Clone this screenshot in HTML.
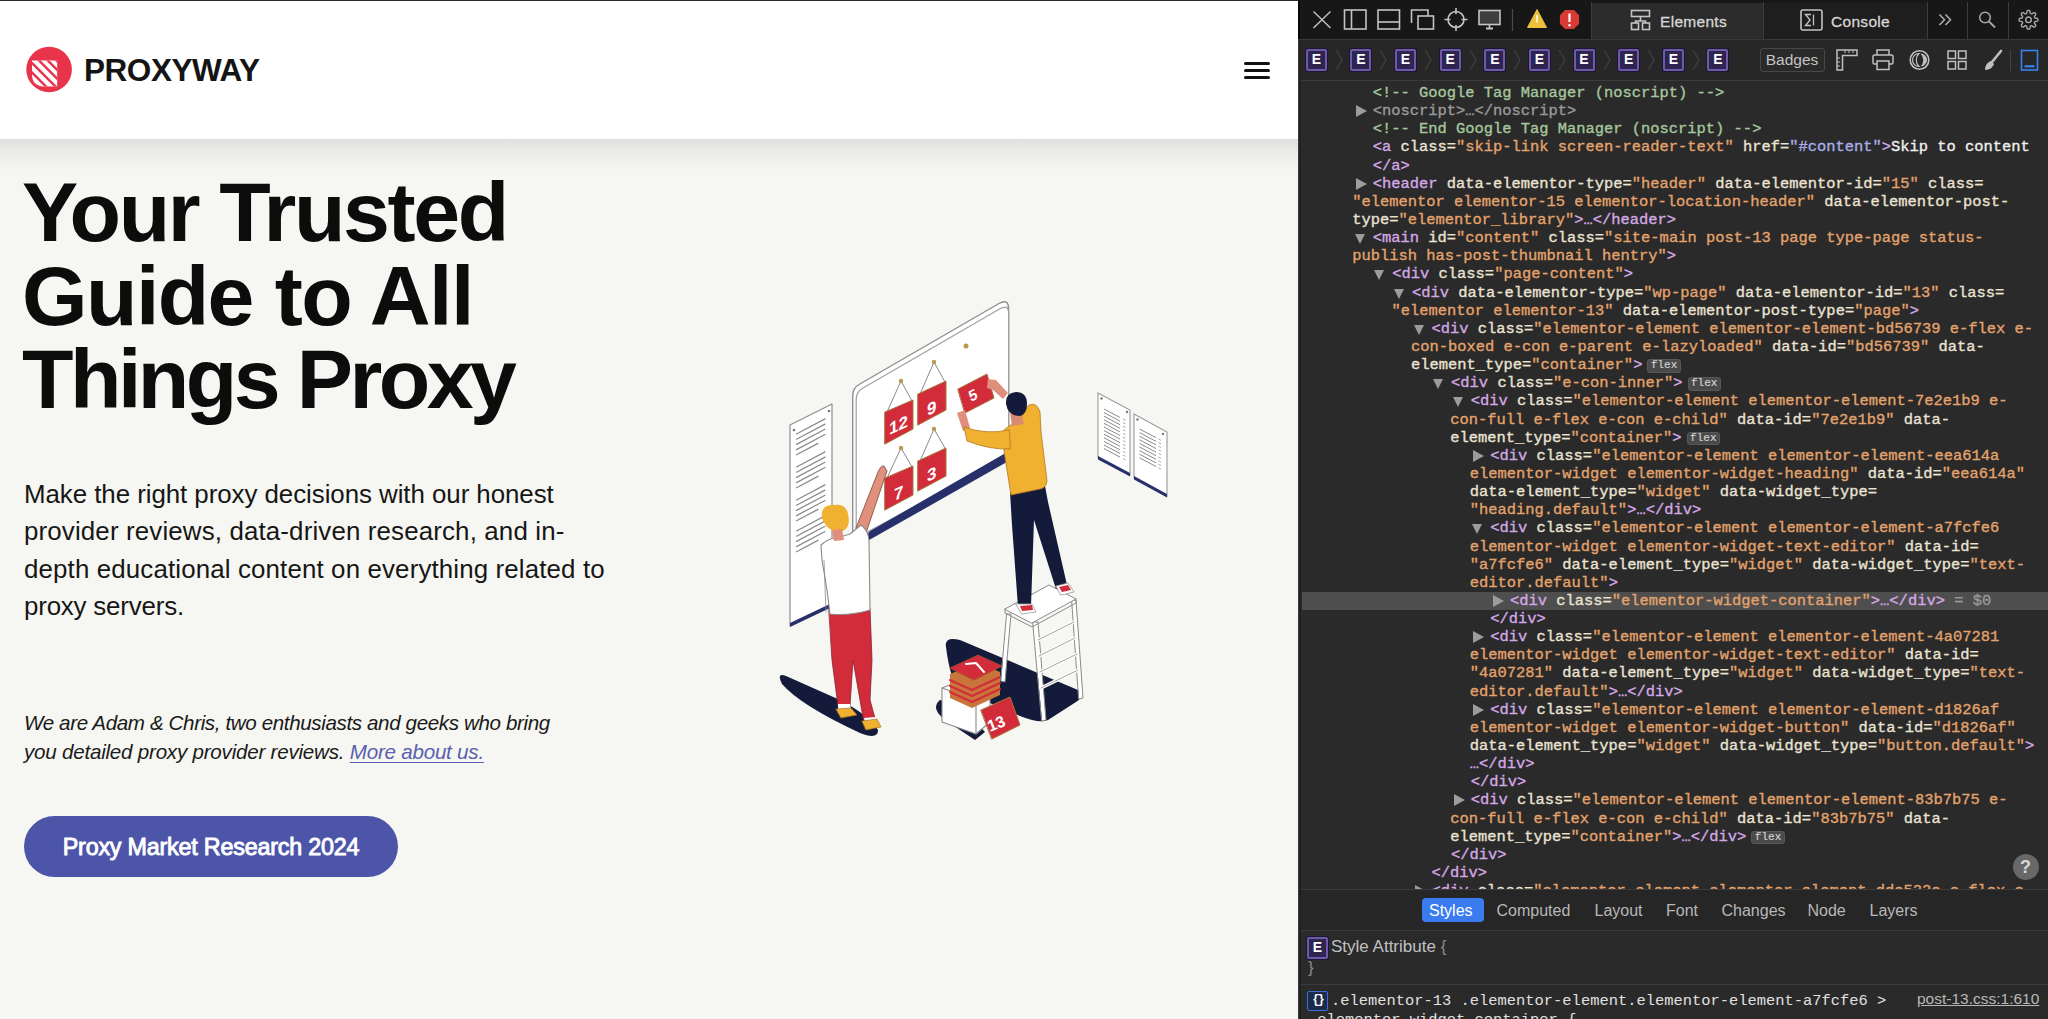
<!DOCTYPE html>
<html><head><meta charset="utf-8">
<style>
*{margin:0;padding:0;box-sizing:border-box}
html,body{width:2048px;height:1019px;overflow:hidden;background:#f6f6f2;font-family:"Liberation Sans",sans-serif}
.abs{position:absolute;white-space:pre}
#page{position:absolute;left:0;top:0;width:1299px;height:1019px;background:#f6f6f2;overflow:hidden}
#hdr{position:absolute;left:0;top:0;width:1299px;height:139px;background:#fff;border-top:1.5px solid #2a2a2a}
#shadow{position:absolute;left:0;top:139px;width:1299px;height:32px;background:linear-gradient(#dededd 0px,#e3e3e1 4px,#e9e9e5 11px,#efefeb 20px,#f6f6f2 32px)}
#logo-txt{left:84px;top:52px;font:bold 31.5px "Liberation Sans",sans-serif;color:#141414;letter-spacing:-0.45px}
.ham{position:absolute;left:1244px;width:26px;height:3.6px;background:#111;border-radius:2px}
h1{position:absolute;left:22px;top:171px;font:bold 84.3px/83.5px "Liberation Sans",sans-serif;color:#0c0c0c}
h1 span{display:block;white-space:pre}
#lead{position:absolute;left:24px;top:476px;font:25.9px/37.3px "Liberation Sans",sans-serif;color:#161616;width:700px}
#lead .l{display:block;white-space:pre}
#about{position:absolute;left:24px;top:707.5px;font:italic 20.6px/29.5px "Liberation Sans",sans-serif;color:#1a1a1a}
#about span{display:block;white-space:pre}
#about a{color:#5a5fb0;text-decoration:underline;text-underline-offset:3px;text-decoration-thickness:1px}
#btn{position:absolute;left:24px;top:816px;width:374px;height:61px;border-radius:31px;background:#4c55a8;color:#fff;font:23.3px/63px "Liberation Sans",sans-serif;text-align:center;letter-spacing:-0.2px;-webkit-text-stroke:0.9px #fff}

#dt{position:absolute;left:1299px;top:0;width:749px;height:1019px;background:#2a2a2a;overflow:hidden}
#dtb{position:absolute;left:1298px;top:0;width:1px;height:1019px;background:#3a3a3a}#dtb2{position:absolute;left:1298px;top:0;width:2px;height:39px;background:#080808}#dtb3{position:absolute;left:1299px;top:40px;width:2px;height:979px;background:#222}
#tb{position:absolute;left:0;top:0;width:749px;height:40px;background:#171717;border-bottom:1.5px solid #383838}
#tabE{position:absolute;left:292px;top:3px;width:172px;height:36px;background:#2b2b2b}
#tabC{position:absolute;left:465px;top:3px;width:163px;height:36px;background:#1e1e1e}
.vl{position:absolute;width:1px;background:#3c3c3c}
.tabt{font:15.5px "Liberation Sans",sans-serif;color:#d6d6d6;letter-spacing:0.3px;-webkit-text-stroke:0.3px currentColor}
#bc{position:absolute;left:0;top:40px;width:749px;height:41px;background:#272727;border-bottom:1.5px solid #3c3c3c}
.eic{position:absolute;width:21px;height:22px;background:#2e2450;border:2px solid #6e5aa6;box-shadow:0 0 0 1px #1d1535;border-radius:2px;color:#fff;font:bold 14px/17px "Liberation Sans",sans-serif;text-align:center}
.bic{position:absolute;width:21px;height:20px;background:#1d2b4a;border:1.5px solid #3a6fd8;border-radius:2px;color:#fff;font:bold 12px/17px "Liberation Mono",monospace;text-align:center;letter-spacing:-2px}
.chev{position:absolute;width:10px;height:21px}
.badges{left:460.5px;top:48px;width:65px;height:24px;border:1px solid #474747;border-radius:3px;font:15.5px/22px "Liberation Sans",sans-serif;color:#c4c4c4;text-align:center;background:#2a2a2a}
#dom{position:absolute;left:0;top:81px;width:749px;height:808px;background:#2a2a2a;overflow:hidden}
.ln{position:absolute;white-space:pre;font:15.43px/18.14px "Liberation Mono",monospace;color:#e6e2d6;-webkit-text-stroke:0.35px currentColor}
.t{color:#d4a8e6}.a{color:#ebe3d3}.v{color:#e3a36c}.c{color:#a6c79c}.g{color:#9a9a9a}.u{color:#a8aee6}.w{color:#f0f0f0}
.bd{display:inline-block;margin-left:5px;height:13.5px;padding:0 2.5px;border-radius:3px;background:#4a4a4a;border:1px solid #585858;color:#d0d0d0;font:11px/11px "Liberation Mono",monospace;vertical-align:1px;-webkit-text-stroke:0.2px currentColor}
.tr{position:absolute;width:0;height:0;border-left:11px solid #9c9c9c;border-top:6.3px solid transparent;border-bottom:6.3px solid transparent}
.td{position:absolute;width:0;height:0;border-top:10.6px solid #9c9c9c;border-left:5.7px solid transparent;border-right:5.7px solid transparent}
.hl{position:absolute;left:3px;width:746px;height:18.14px;background:#4e4e4e}
#tabs{position:absolute;left:0;top:889px;width:749px;height:42px;background:#262626;border-top:1px solid #3c3c3c;border-bottom:1px solid #3c3c3c}
.pill{left:122.5px;top:898px;width:62px;height:23.5px;background:#3a7cf0;border-radius:4px}
.st{font:16px/20px "Liberation Sans",sans-serif;color:#b8b8b8}
#sty{position:absolute;left:0;top:931px;width:749px;height:88px;background:#2a2a2a}
.sa{font:17px/20px "Liberation Sans",sans-serif;color:#c0c0c0}
.hr2{left:0;width:749px;height:1px;background:#3c3c3c}
.ln2{font:15.43px/18px "Liberation Mono",monospace;color:#e0e0e0}
.link{left:618px;top:990px;font:15.5px/18px "Liberation Sans",sans-serif;color:#b8b8b8;text-decoration:underline}
.help{position:absolute;left:713.5px;top:853.5px;width:26px;height:26px;border-radius:13px;background:#686868;color:#d8d8d8;font:bold 18px/26px "Liberation Sans",sans-serif;text-align:center}
</style></head><body>
<div id="page">
  <div id="hdr"></div>
  <div id="shadow"></div>
  <svg class="abs" style="left:26px;top:46px" width="47" height="47" viewBox="0 0 47 47">
    <defs><clipPath id="lc"><path d="M6 14.4 H31.2 V40.6 H19 Q6 40.6 6 28 Z"/></clipPath></defs>
    <circle cx="23.1" cy="23.5" r="22.8" fill="#e8334a"/>
    <g clip-path="url(#lc)">
      <rect x="0" y="0" width="47" height="47" fill="#fff"/>
      <g stroke="#e8334a" stroke-width="2.4">
      <line x1="-10" y1="-26" x2="60" y2="44"/>
      <line x1="-10" y1="-17.3" x2="60" y2="52.7"/>
      <line x1="-10" y1="-8.5" x2="60" y2="61.5"/>
      <line x1="-10" y1="1" x2="60" y2="71"/>
      <line x1="-10" y1="10.5" x2="60" y2="80.5"/>
      </g>
    </g>
  </svg>
  <div id="logo-txt" class="abs">PROXYWAY</div>
  <div class="ham" style="top:61.5px"></div>
  <div class="ham" style="top:68.5px"></div>
  <div class="ham" style="top:75.5px"></div>
  <h1><span style="letter-spacing:-2.41px">Your Trusted</span><span style="letter-spacing:-1.59px">Guide to All</span><span style="letter-spacing:-3.55px">Things Proxy</span></h1>
  <div id="lead"><span class="l" style="letter-spacing:-0.06px">Make the right proxy decisions with our honest</span><span class="l" style="letter-spacing:0.14px">provider reviews, data-driven research, and in-</span><span class="l" style="letter-spacing:0.13px">depth educational content on everything related to</span><span class="l" style="letter-spacing:-0.19px">proxy servers.</span></div>
  <div id="about"><span style="letter-spacing:-0.38px">We are Adam &amp; Chris, two enthusiasts and geeks who bring</span><span style="letter-spacing:-0.23px">you detailed proxy provider reviews. <a>More about us.</a></span></div>
  <div id="btn">Proxy Market Research 2024</div>
  <svg class="abs" style="left:0;top:0" width="1299" height="1019" viewBox="0 0 1299 1019">
  <g stroke-linejoin="round" stroke-linecap="round">
  <!-- left paper -->
  <path d="M790 425 L832 404 L832 606 L790 626 Z" fill="#fff" stroke="#8e8e8e" stroke-width="1.2"/>
  <path d="M790 623 L832 603 L832 607 L790 627 Z" fill="#27306a"/>
  <g stroke="#8a8a8a" stroke-width="1.2">
    <path d="M796.5 434.0 L825 418.9 M796.5 439.2 L825 424.1 M796.5 444.4 L825 429.3 M796.5 449.6 L825 434.5 M796.5 454.8 L818 443.4 M796.5 467.0 L825 451.9 M796.5 472.2 L825 457.1 M796.5 477.4 L825 462.3 M796.5 482.6 L825 467.5 M796.5 487.8 L818 476.4 M796.5 500.0 L825 484.9 M796.5 505.2 L825 490.1 M796.5 510.4 L825 495.3 M796.5 515.6 L825 500.5 M796.5 520.8 L818 509.4 M796.5 531.0 L825 515.9 M796.5 536.2 L825 521.1 M796.5 541.4 L825 526.3 M796.5 546.6 L825 531.5 M796.5 551.8 L818 540.4"/>
  </g>
  <circle cx="794" cy="430" r="1.3" fill="#777"/><circle cx="829" cy="411" r="1.3" fill="#777"/>
  <!-- board -->
  <path d="M852.7 536 L852.7 396 Q852.7 387.8 859.8 384 L999 303.5 Q1008.6 298.2 1008.6 309 L1008.6 456 Z" fill="#fff" stroke="#8f8f8f" stroke-width="1.4"/>
  <path d="M856.2 538 L856.2 399.5 Q856.2 392 863 388 L1000 308.8 Q1008.6 303.8 1008.6 313 L1008.6 456 Z" fill="#fff" stroke="#a0a0a0" stroke-width="1.2"/>
  <path d="M864.3 542.8 L869 531.8 L1006 452.8 L1006 462.6 Z" fill="#27306a"/>
  <circle cx="966" cy="346" r="2.5" fill="#b89a50"/>
  <!-- strings -->
  <g stroke="#8a8a8a" stroke-width="1" fill="none">
    <path d="M887 412 L901 381 L912 401"/>
    <path d="M920 394 L934 362 L945 382"/>
    <path d="M887 478 L901 448 L912 467"/>
    <path d="M920 461 L934 429 L945 448"/>
  </g>
  <g fill="#b89a50"><circle cx="901" cy="381" r="2.2"/><circle cx="934" cy="362" r="2.2"/><circle cx="901" cy="448" r="2.2"/><circle cx="934" cy="429" r="2.2"/></g>
  <!-- cards -->
  <g fill="#d22c3a" stroke="#a8743e" stroke-width="1">
    <path d="M885 412 L913 400 L913 429 L885 444 Z"/>
    <path d="M918 394 L946 381 L946 410 L918 425 Z"/>
    <path d="M885 478 L913 466 L913 495 L885 510 Z"/>
    <path d="M918 461 L946 448 L946 476 L918 491 Z"/>
    <path d="M958 389 L987 374 L994 398 L965 413 Z"/>
  </g>
  <g fill="#fff" font-family="Liberation Sans" font-weight="bold" font-size="17">
    <text transform="translate(889 435) skewY(-24)">12</text>
    <text transform="translate(927 416) skewY(-24)">9</text>
    <text transform="translate(894 501) skewY(-24)">7</text>
    <text transform="translate(927 482) skewY(-24)">3</text>
    <text transform="translate(971 402) rotate(-20) skewY(-8)" font-size="15">5</text>
  </g>
  <!-- person 1 shadow -->
  <path d="M786 676 Q776 672 782 684 Q800 705 860 733 Q878 740 878 730 Q870 716 840 700 Z" fill="#141b3a"/>
  <!-- person 1 arm -->
  <path d="M856 528 L878 472 Q881 465 884 466 L887 471 L866 533 Z" fill="#e0907c" stroke="#7a4a3a" stroke-width="0.8"/>
  <!-- pants -->
  <path d="M829 608 L870 608 L872 660 L870 700 L876 722 L864 723 L853 660 L850 706 L838 706 L832 660 Z" fill="#d22c3a" stroke="#8a2030" stroke-width="0.8"/>
  <path d="M838 704 L850 704 L851 709 L838 709 Z" fill="#fff"/>
  <path d="M864 718 L876 717 L877 722 L865 722 Z" fill="#fff"/>
  <!-- shoes -->
  <path d="M836 709 L851 708 L857 715 L841 718 Z" fill="#f0b030" stroke="#9a6a20" stroke-width="0.6"/>
  <path d="M862 721 L877 719 L881 727 L866 730 Z" fill="#f0b030" stroke="#9a6a20" stroke-width="0.6"/>
  <!-- shirt -->
  <path d="M821 545 Q828 538 840 537 L850 534 L861 525 Q868 530 869 540 L870 610 Q850 616 830 614 L827 590 L822 560 Z" fill="#fff" stroke="#8a8a8a" stroke-width="1.1"/>
  <path d="M824 560 L826 612" stroke="#8a8a8a" stroke-width="0.8" fill="none"/>
  <!-- hair -->
  <path d="M822 518 Q820 505 833 505 Q846 503 848 514 Q851 527 843 531 Q828 534 822 518 Z" fill="#f0b030"/>
  <path d="M832 530 L842 529 L844 540 L834 541 Z" fill="#e08f7c"/>

  <!-- big shadow right -->
  <path d="M946 647 Q944 636 960 640 L1078 690 Q1086 696 1076 702 L1048 720 Q1040 724 1020 716 L960 690 Q950 680 946 647 Z" fill="#141b3a"/>
  <path d="M940 700 Q930 708 945 720 L975 740 L985 732 L960 705 Z" fill="#141b3a"/>
  <!-- box -->
  <path d="M942 688 L968 678 L990 688 L990 722 L976 734 L942 722 Z" fill="#fff" stroke="#8a8a8a" stroke-width="1.1"/>
  <path d="M942 688 L976 700 L976 734" fill="none" stroke="#8a8a8a" stroke-width="1.1"/>
  <!-- red stack -->
  <path d="M950 674 L978 662 L1000 672 L1000 695 L972 708 L950 698 Z" fill="#c8743a"/>
  <g stroke="#d22c3a" stroke-width="2" fill="none"><path d="M950 680 L972 690 L1000 677 M950 686 L972 696 L1000 683 M950 692 L972 702 L1000 689"/></g>
  <path d="M950 668 L978 655 L1002 666 L974 680 Z" fill="#d22c3a" stroke="#a05030" stroke-width="0.8"/>
  <path d="M966 664 L976 663 L984 672" stroke="#fff" stroke-width="2" fill="none"/>
  <!-- card 13 -->
  <path d="M981 710 L1010 697 L1020 725 L992 739 Z" fill="#d22c3a" stroke="#a8743e" stroke-width="1"/>
  <text transform="translate(990 732) rotate(-22)" fill="#fff" font-family="Liberation Sans" font-weight="bold" font-size="16">13</text>
  <!-- ladder -->
  <g stroke="#8a8a8a" stroke-width="1" fill="#fff">
    <path d="M1007 614 L1011 614 L1005 682 L1001 681 Z"/>
    <path d="M1033 622 L1038 622 L1046 720 L1042 721 Z"/>
    <path d="M1072 600 L1076 600 L1083 698 L1079 699 Z"/>
    <path d="M1038 640 L1074 622 M1039 656 L1075 638 M1040 672 L1077 654 M1041 688 L1078 670" stroke="#fff" stroke-width="3.5"/>
    <path d="M1038 640 L1074 622 M1039 656 L1075 638 M1040 672 L1077 654 M1041 688 L1078 670" stroke="#8a8a8a" stroke-width="0.8" fill="none"/>
    <path d="M1005 609 L1049 585 L1076 599 L1032 623 Z"/>
    <path d="M1005 609 L1005 613 L1032 627 L1076 603 L1076 599" fill="none"/>
  </g>
  <!-- person 2 pants -->
  <path d="M1010 492 L1045 486 L1048 502 L1067 585 L1056 589 L1034 520 L1031 606 L1018 607 L1012 525 Z" fill="#141b3a"/>
  <path d="M1016 604 L1032 604 L1036 612 L1022 614 Z" fill="#fff" stroke="#999" stroke-width="0.8"/>
  <path d="M1020 606 L1032 605 L1033 610 L1022 611 Z" fill="#d22c3a"/>
  <path d="M1056 586 L1068 583 L1074 592 L1061 595 Z" fill="#fff" stroke="#999" stroke-width="0.8"/>
  <path d="M1059 587 L1068 585 L1071 590 L1062 592 Z" fill="#d22c3a"/>
  <!-- person 2 arms -->
  <path d="M988 379 L996 380 L1008 393 L1003 399 L993 390 L987 388 Z" fill="#e08f7c"/>
  <path d="M957 413 L965 410 L970 428 L963 431 Z" fill="#e08f7c"/>
  <!-- sweater -->
  <path d="M1004 430 Q1010 424 1021 421 Q1023 409 1029 405 Q1037 402 1040 412 L1041 432 L1047 481 Q1046 488 1040 489 L1011 495 L1004 451 Z" fill="#f0b030" stroke="#b07820" stroke-width="0.8"/>
  <path d="M1009 430 Q986 435 964 427 L967 441 Q990 450 1010 449 Z" fill="#f0b030" stroke="#b07820" stroke-width="0.8"/>
  <!-- head -->
  <path d="M1010 412 L1020 410 L1024 424 L1012 426 Z" fill="#d98a70"/>
  <path d="M1006 404 Q1005 393 1016 392 Q1027 392 1027 404 Q1027 414 1020 416 Q1008 416 1006 404 Z" fill="#141b3a"/>
  </g>
  <!-- right papers -->
  <path d="M1098 393 L1130 410 L1130 475 L1098 458 Z" fill="#fff" stroke="#9a9a9a" stroke-width="1.1"/>
  <path d="M1098 456 L1130 473 L1130 476.5 L1098 459.5 Z" fill="#27306a"/>
  <path d="M1134 414 L1167 432 L1167 496 L1134 478 Z" fill="#fff" stroke="#9a9a9a" stroke-width="1.1"/>
  <path d="M1134 476 L1167 494 L1167 497.5 L1134 479.5 Z" fill="#27306a"/>
  <g stroke="#8a8a8a" stroke-width="1"><path d="M1104 409.0 L1120 417.5 M1104 412.6 L1120 421.1 M1104 416.2 L1120 424.7 M1104 419.8 L1120 428.3 M1104 423.4 L1120 431.9 M1104 427.0 L1120 435.5 M1104 430.6 L1120 439.1 M1104 434.2 L1120 442.7 M1104 437.8 L1120 446.3 M1104 441.4 L1120 449.9 M1104 445.0 L1120 453.5 M1104 448.6 L1120 457.1 M1139.5 429.0 L1156 437.7 M1139.5 432.6 L1156 441.3 M1139.5 436.2 L1156 444.9 M1139.5 439.8 L1156 448.5 M1139.5 443.4 L1156 452.1 M1139.5 447.0 L1156 455.7 M1139.5 450.6 L1156 459.3 M1139.5 454.2 L1156 462.9 M1139.5 457.8 L1156 466.5"/></g>
  <g stroke="#aaa" stroke-width="1"><path d="M1123 419.0 L1125.5 420.3 M1123 422.6 L1125.5 423.9 M1123 426.2 L1125.5 427.5 M1123 429.8 L1125.5 431.1 M1123 433.4 L1125.5 434.7 M1123 437.0 L1125.5 438.3 M1123 440.6 L1125.5 441.9 M1123 444.2 L1125.5 445.5 M1123 447.8 L1125.5 449.1 M1123 451.4 L1125.5 452.7 M1123 455.0 L1125.5 456.3 M1123 458.6 L1125.5 459.9 M1158.5 439.0 L1161 440.3 M1158.5 442.6 L1161 443.9 M1158.5 446.2 L1161 447.5 M1158.5 449.8 L1161 451.1 M1158.5 453.4 L1161 454.7 M1158.5 457.0 L1161 458.3 M1158.5 460.6 L1161 461.9 M1158.5 464.2 L1161 465.5 M1158.5 467.8 L1161 469.1"/></g>
  <circle cx="1101.5" cy="398.5" r="1.2" fill="#777"/><circle cx="1127" cy="412" r="1.2" fill="#777"/>
  <circle cx="1137.5" cy="419.5" r="1.2" fill="#777"/><circle cx="1163" cy="434" r="1.2" fill="#777"/>
</svg>

</div>
<div id="dt">
  <div id="tb"></div>
  <div id="tabE"></div>
  <div id="tabC"></div>
  <!-- toolbar icons -->
  <svg class="abs" style="left:0;top:0" width="749" height="40" viewBox="1299 0 749 40" fill="none" stroke="#c4c4c4" stroke-width="1.6">
    <path d="M1313.5 11.5 L1330.5 28 M1330.5 11.5 L1313.5 28" stroke-width="1.4"/>
    <rect x="1344.5" y="10" width="21.5" height="19"/>
    <line x1="1351.5" y1="10" x2="1351.5" y2="29"/>
    <rect x="1378" y="10" width="21.5" height="19"/>
    <line x1="1378" y1="22" x2="1399.5" y2="22"/>
    <path d="M1411.5 23 V10 H1428 V15.5"/>
    <rect x="1418" y="16" width="15.5" height="13"/>
    <circle cx="1456" cy="19.5" r="8"/>
    <path d="M1456 8 V14 M1456 25 V31 M1444.5 19.5 H1450.5 M1461.5 19.5 H1467.5"/>
    <rect x="1479" y="10.5" width="21" height="14" fill="#3e3e3e"/>
    <path d="M1486 28.5 H1493" stroke-width="2"/>
    <path d="M1489.5 25 V28"/>
    <line x1="1512.5" y1="9" x2="1512.5" y2="31" stroke="#4a4a4a" stroke-width="1.2"/>
    <path d="M1537 9.5 L1546.5 27.5 H1527.5 Z" fill="#ecc03a" stroke="#ecc03a" stroke-width="1" stroke-linejoin="round"/>
    <path d="M1537 15 V22.5" stroke="#fff6d0" stroke-width="1.8"/>
    <path d="M1565.5 10.5 H1573.5 L1578.5 15.5 V23.5 L1573.5 28.5 H1565.5 L1560.5 23.5 V15.5 Z" fill="#d83a36" stroke="#d83a36" stroke-width="1.2" stroke-linejoin="round"/>
    <path d="M1569.5 13.5 V22" stroke="#fff" stroke-width="2.2"/>
    <circle cx="1569.5" cy="25.3" r="1.2" fill="#fff" stroke="none"/>
    <!-- elements icon -->
    <rect x="1631.5" y="10.5" width="18" height="6"/>
    <path d="M1640.5 16.5 V21 M1635.5 23 V21 H1645.5 V23"/>
    <rect x="1631.5" y="23" width="7" height="6.5"/>
    <rect x="1642.5" y="23" width="7" height="6.5"/>
    <!-- console icon -->
    <rect x="1801" y="10" width="21" height="20" rx="2"/>
    <path d="M1811 14.5 H1805.5 L1810 20 L1805.5 25.5 H1811" stroke-width="1.3"/>
    <path d="M1813.5 14.5 V25.5" stroke-width="1.3"/>
    <!-- chevrons -->
    <path d="M1939.5 14.5 L1944.5 19.8 L1939.5 25 M1945.5 14.5 L1950.5 19.8 L1945.5 25" stroke="#b0b0b0" stroke-width="1.5"/>
    <!-- search -->
    <circle cx="1985" cy="17.5" r="5.3" stroke="#a8a8a8" stroke-width="1.5"/>
    <path d="M1989 21.5 L1995 27.5" stroke="#a8a8a8" stroke-width="1.8"/>
    <!-- gear -->
    <path d="M2038.00 19.80 L2037.97 20.10 L2037.89 20.39 L2037.76 20.68 L2037.56 20.94 L2037.27 21.19 L2036.78 21.38 L2035.62 21.39 L2035.26 21.54 L2035.01 21.69 L2034.81 21.85 L2034.66 22.02 L2034.55 22.19 L2034.47 22.38 L2034.43 22.59 L2034.41 22.81 L2034.44 23.06 L2034.51 23.35 L2034.66 23.71 L2035.47 24.54 L2035.69 25.02 L2035.72 25.40 L2035.67 25.73 L2035.56 26.03 L2035.41 26.29 L2035.22 26.52 L2034.99 26.71 L2034.73 26.86 L2034.43 26.97 L2034.10 27.02 L2033.72 26.99 L2033.24 26.77 L2032.41 25.96 L2032.05 25.81 L2031.76 25.74 L2031.51 25.71 L2031.29 25.73 L2031.08 25.77 L2030.89 25.85 L2030.72 25.96 L2030.55 26.11 L2030.39 26.31 L2030.24 26.56 L2030.09 26.92 L2030.08 28.08 L2029.89 28.57 L2029.64 28.86 L2029.38 29.06 L2029.09 29.19 L2028.80 29.27 L2028.50 29.30 L2028.20 29.27 L2027.91 29.19 L2027.62 29.06 L2027.36 28.86 L2027.11 28.57 L2026.92 28.08 L2026.91 26.92 L2026.76 26.56 L2026.61 26.31 L2026.45 26.11 L2026.28 25.96 L2026.11 25.85 L2025.92 25.77 L2025.71 25.73 L2025.49 25.71 L2025.24 25.74 L2024.95 25.81 L2024.59 25.96 L2023.76 26.77 L2023.28 26.99 L2022.90 27.02 L2022.57 26.97 L2022.27 26.86 L2022.01 26.71 L2021.78 26.52 L2021.59 26.29 L2021.44 26.03 L2021.33 25.73 L2021.28 25.40 L2021.31 25.02 L2021.53 24.54 L2022.34 23.71 L2022.49 23.35 L2022.56 23.06 L2022.59 22.81 L2022.57 22.59 L2022.53 22.38 L2022.45 22.19 L2022.34 22.02 L2022.19 21.85 L2021.99 21.69 L2021.74 21.54 L2021.38 21.39 L2020.22 21.38 L2019.73 21.19 L2019.44 20.94 L2019.24 20.68 L2019.11 20.39 L2019.03 20.10 L2019.00 19.80 L2019.03 19.50 L2019.11 19.21 L2019.24 18.92 L2019.44 18.66 L2019.73 18.41 L2020.22 18.22 L2021.38 18.21 L2021.74 18.06 L2021.99 17.91 L2022.19 17.75 L2022.34 17.58 L2022.45 17.41 L2022.53 17.22 L2022.57 17.01 L2022.59 16.79 L2022.56 16.54 L2022.49 16.25 L2022.34 15.89 L2021.53 15.06 L2021.31 14.58 L2021.28 14.20 L2021.33 13.87 L2021.44 13.57 L2021.59 13.31 L2021.78 13.08 L2022.01 12.89 L2022.27 12.74 L2022.57 12.63 L2022.90 12.58 L2023.28 12.61 L2023.76 12.83 L2024.59 13.64 L2024.95 13.79 L2025.24 13.86 L2025.49 13.89 L2025.71 13.87 L2025.92 13.83 L2026.11 13.75 L2026.28 13.64 L2026.45 13.49 L2026.61 13.29 L2026.76 13.04 L2026.91 12.68 L2026.92 11.52 L2027.11 11.03 L2027.36 10.74 L2027.62 10.54 L2027.91 10.41 L2028.20 10.33 L2028.50 10.30 L2028.80 10.33 L2029.09 10.41 L2029.38 10.54 L2029.64 10.74 L2029.89 11.03 L2030.08 11.52 L2030.09 12.68 L2030.24 13.04 L2030.39 13.29 L2030.55 13.49 L2030.72 13.64 L2030.89 13.75 L2031.08 13.83 L2031.29 13.87 L2031.51 13.89 L2031.76 13.86 L2032.05 13.79 L2032.41 13.64 L2033.24 12.83 L2033.72 12.61 L2034.10 12.58 L2034.43 12.63 L2034.73 12.74 L2034.99 12.89 L2035.22 13.08 L2035.41 13.31 L2035.56 13.57 L2035.67 13.87 L2035.72 14.20 L2035.69 14.58 L2035.47 15.06 L2034.66 15.89 L2034.51 16.25 L2034.44 16.54 L2034.41 16.79 L2034.43 17.01 L2034.47 17.22 L2034.55 17.41 L2034.66 17.58 L2034.81 17.75 L2035.01 17.91 L2035.26 18.06 L2035.62 18.21 L2036.78 18.22 L2037.27 18.41 L2037.56 18.66 L2037.76 18.92 L2037.89 19.21 L2037.97 19.50 Z" stroke="#a8a8a8" stroke-width="1.4" stroke-linejoin="round"/>
    <circle cx="2028.5" cy="19.8" r="2.8" stroke="#a8a8a8" stroke-width="1.4"/>
  </svg>
  <div class="abs tabt" style="left:361px;top:13px">Elements</div>
  <div class="abs tabt" style="left:532px;top:13px">Console</div>
  <div class="vl" style="left:292px;top:2px;height:37px"></div>
  <div class="vl" style="left:464px;top:2px;height:37px"></div>
  <div class="vl" style="left:628px;top:2px;height:37px"></div>
  <div class="vl" style="left:668px;top:2px;height:37px"></div>
  <div class="vl" style="left:709px;top:2px;height:37px"></div>

  <div id="bc"></div>
  <!-- breadcrumb E icons -->
  <div class="eic" style="left:6.8px;top:49px">E</div>
  <svg class="abs" style="left:34.8px;top:49px" width="10" height="22" viewBox="0 0 10 22"><path d="M2 1 L8 11 L2 21" fill="none" stroke="#3e3e3e" stroke-width="1.4"/></svg>
  <div class="eic" style="left:51.4px;top:49px">E</div>
  <svg class="abs" style="left:79.4px;top:49px" width="10" height="22" viewBox="0 0 10 22"><path d="M2 1 L8 11 L2 21" fill="none" stroke="#3e3e3e" stroke-width="1.4"/></svg>
  <div class="eic" style="left:96.0px;top:49px">E</div>
  <svg class="abs" style="left:124.0px;top:49px" width="10" height="22" viewBox="0 0 10 22"><path d="M2 1 L8 11 L2 21" fill="none" stroke="#3e3e3e" stroke-width="1.4"/></svg>
  <div class="eic" style="left:140.7px;top:49px">E</div>
  <svg class="abs" style="left:168.7px;top:49px" width="10" height="22" viewBox="0 0 10 22"><path d="M2 1 L8 11 L2 21" fill="none" stroke="#3e3e3e" stroke-width="1.4"/></svg>
  <div class="eic" style="left:185.3px;top:49px">E</div>
  <svg class="abs" style="left:213.3px;top:49px" width="10" height="22" viewBox="0 0 10 22"><path d="M2 1 L8 11 L2 21" fill="none" stroke="#3e3e3e" stroke-width="1.4"/></svg>
  <div class="eic" style="left:229.9px;top:49px">E</div>
  <svg class="abs" style="left:257.9px;top:49px" width="10" height="22" viewBox="0 0 10 22"><path d="M2 1 L8 11 L2 21" fill="none" stroke="#3e3e3e" stroke-width="1.4"/></svg>
  <div class="eic" style="left:274.5px;top:49px">E</div>
  <svg class="abs" style="left:302.5px;top:49px" width="10" height="22" viewBox="0 0 10 22"><path d="M2 1 L8 11 L2 21" fill="none" stroke="#3e3e3e" stroke-width="1.4"/></svg>
  <div class="eic" style="left:319.1px;top:49px">E</div>
  <svg class="abs" style="left:347.1px;top:49px" width="10" height="22" viewBox="0 0 10 22"><path d="M2 1 L8 11 L2 21" fill="none" stroke="#3e3e3e" stroke-width="1.4"/></svg>
  <div class="eic" style="left:363.8px;top:49px">E</div>
  <svg class="abs" style="left:391.8px;top:49px" width="10" height="22" viewBox="0 0 10 22"><path d="M2 1 L8 11 L2 21" fill="none" stroke="#3e3e3e" stroke-width="1.4"/></svg>
  <div class="eic" style="left:408.4px;top:49px">E</div>
  <div class="abs badges">Badges</div>
  <svg class="abs" style="left:0;top:40px" width="749" height="40" viewBox="1299 40 749 40" fill="none" stroke="#c0c0c0" stroke-width="1.5">
    <!-- ruler -->
    <path d="M1837 50 H1857 V55.5 H1842.5 V70 H1837 Z"/>
    <path d="M1845 50 V53 M1849 50 V53 M1853 50 V53 M1837 58 H1840 M1837 62 H1840 M1837 66 H1840" stroke-width="1"/>
    <!-- printer -->
    <path d="M1877 55 V50 H1889 V55"/>
    <rect x="1873" y="55" width="20" height="9" rx="1.5"/>
    <rect x="1877" y="61" width="12" height="8.5" fill="#262626"/>
    <!-- contrast circle -->
    <circle cx="1919.5" cy="60" r="9.3" stroke-width="1.6"/>
    <path d="M1920.5 53.5 A6.5 6.5 0 0 1 1920.5 66.5 A9 9 0 0 0 1920.5 53.5 Z" fill="#c0c0c0" stroke="none"/>
    <path d="M1919 53.5 A6.5 6.5 0 0 0 1919 66.5 A9 9 0 0 1 1919 53.5 Z" fill="none" stroke-width="1.2"/>
    <!-- grid -->
    <rect x="1948" y="51" width="7.5" height="7.5"/><rect x="1958.5" y="51" width="7.5" height="7.5"/>
    <rect x="1948" y="61.5" width="7.5" height="7.5"/><rect x="1958.5" y="61.5" width="7.5" height="7.5"/>
    <!-- brush -->
    <path d="M2001 51 L1992 62" stroke-width="2.6" stroke-linecap="round"/>
    <path d="M1991 61.5 Q1986 63 1985.5 69.5 Q1992 69 1993.5 64 Z" fill="#c0c0c0" stroke-width="1"/>
    <line x1="2010.5" y1="50" x2="2010.5" y2="71" stroke="#444" stroke-width="1"/>
    <!-- blue book -->
    <rect x="2021.5" y="50.5" width="16" height="19.5" stroke="#3b82f0" stroke-width="1.6"/>
    <path d="M2024.5 66.3 H2034.5" stroke="#3b82f0" stroke-width="2.2"/>
  </svg>

  <div id="dom">
<div class="ln" style="left:73.7px;top:3.00px"><span class="c">&lt;!-- Google Tag Manager (noscript) --&gt;</span></div>
<div class="tr" style="left:56.7px;top:24.14px"></div>
<div class="ln" style="left:73.7px;top:21.14px"><span class="g">&lt;noscript&gt;…&lt;/noscript&gt;</span></div>
<div class="ln" style="left:73.7px;top:39.28px"><span class="c">&lt;!-- End Google Tag Manager (noscript) --&gt;</span></div>
<div class="ln" style="left:73.7px;top:57.42px"><span class="t">&lt;a</span><span class="a"> class=</span><span class="v">&quot;skip-link screen-reader-text&quot;</span><span class="a"> href=</span><span class="u">&quot;#content&quot;</span><span class="t">&gt;</span><span class="w">Skip to content</span></div>
<div class="ln" style="left:73.7px;top:75.56px"><span class="t">&lt;/a&gt;</span></div>
<div class="tr" style="left:56.7px;top:96.70px"></div>
<div class="ln" style="left:73.7px;top:93.70px"><span class="t">&lt;header</span><span class="a"> data-elementor-type=</span><span class="v">&quot;header&quot;</span><span class="a"> data-elementor-id=</span><span class="v">&quot;15&quot;</span><span class="a"> class=</span></div>
<div class="ln" style="left:53.2px;top:111.84px"><span class="v">&quot;elementor elementor-15 elementor-location-header&quot;</span><span class="a"> data-elementor-post-</span></div>
<div class="ln" style="left:53.2px;top:129.98px"><span class="a">type=</span><span class="v">&quot;elementor_library&quot;</span><span class="t">&gt;…&lt;/header&gt;</span></div>
<div class="td" style="left:55.7px;top:153.12px"></div>
<div class="ln" style="left:73.7px;top:148.12px"><span class="t">&lt;main</span><span class="a"> id=</span><span class="v">&quot;content&quot;</span><span class="a"> class=</span><span class="v">&quot;site-main post-13 page type-page status-</span></div>
<div class="ln" style="left:53.2px;top:166.26px"><span class="v">publish has-post-thumbnail hentry&quot;</span><span class="t">&gt;</span></div>
<div class="td" style="left:75.3px;top:189.40px"></div>
<div class="ln" style="left:93.3px;top:184.40px"><span class="t">&lt;div</span><span class="a"> class=</span><span class="v">&quot;page-content&quot;</span><span class="t">&gt;</span></div>
<div class="td" style="left:94.9px;top:207.54px"></div>
<div class="ln" style="left:112.9px;top:202.54px"><span class="t">&lt;div</span><span class="a"> data-elementor-type=</span><span class="v">&quot;wp-page&quot;</span><span class="a"> data-elementor-id=</span><span class="v">&quot;13&quot;</span><span class="a"> class=</span></div>
<div class="ln" style="left:92.4px;top:220.68px"><span class="v">&quot;elementor elementor-13&quot;</span><span class="a"> data-elementor-post-type=</span><span class="v">&quot;page&quot;</span><span class="t">&gt;</span></div>
<div class="td" style="left:114.5px;top:243.82px"></div>
<div class="ln" style="left:132.5px;top:238.82px"><span class="t">&lt;div</span><span class="a"> class=</span><span class="v">&quot;elementor-element elementor-element-bd56739 e-flex e-</span></div>
<div class="ln" style="left:112.0px;top:256.96px"><span class="v">con-boxed e-con e-parent e-lazyloaded&quot;</span><span class="a"> data-id=</span><span class="v">&quot;bd56739&quot;</span><span class="a"> data-</span></div>
<div class="ln" style="left:112.0px;top:275.10px"><span class="a">element_type=</span><span class="v">&quot;container&quot;</span><span class="t">&gt;</span><span class="bd">flex</span></div>
<div class="td" style="left:134.1px;top:298.24px"></div>
<div class="ln" style="left:152.1px;top:293.24px"><span class="t">&lt;div</span><span class="a"> class=</span><span class="v">&quot;e-con-inner&quot;</span><span class="t">&gt;</span><span class="bd">flex</span></div>
<div class="td" style="left:153.7px;top:316.38px"></div>
<div class="ln" style="left:171.7px;top:311.38px"><span class="t">&lt;div</span><span class="a"> class=</span><span class="v">&quot;elementor-element elementor-element-7e2e1b9 e-</span></div>
<div class="ln" style="left:151.2px;top:329.52px"><span class="v">con-full e-flex e-con e-child&quot;</span><span class="a"> data-id=</span><span class="v">&quot;7e2e1b9&quot;</span><span class="a"> data-</span></div>
<div class="ln" style="left:151.2px;top:347.66px"><span class="a">element_type=</span><span class="v">&quot;container&quot;</span><span class="t">&gt;</span><span class="bd">flex</span></div>
<div class="tr" style="left:174.3px;top:368.80px"></div>
<div class="ln" style="left:191.3px;top:365.80px"><span class="t">&lt;div</span><span class="a"> class=</span><span class="v">&quot;elementor-element elementor-element-eea614a</span></div>
<div class="ln" style="left:170.8px;top:383.94px"><span class="v">elementor-widget elementor-widget-heading&quot;</span><span class="a"> data-id=</span><span class="v">&quot;eea614a&quot;</span></div>
<div class="ln" style="left:170.8px;top:402.08px"><span class="a">data-element_type=</span><span class="v">&quot;widget&quot;</span><span class="a"> data-widget_type=</span></div>
<div class="ln" style="left:170.8px;top:420.22px"><span class="v">&quot;heading.default&quot;</span><span class="t">&gt;…&lt;/div&gt;</span></div>
<div class="td" style="left:173.3px;top:443.36px"></div>
<div class="ln" style="left:191.3px;top:438.36px"><span class="t">&lt;div</span><span class="a"> class=</span><span class="v">&quot;elementor-element elementor-element-a7fcfe6</span></div>
<div class="ln" style="left:170.8px;top:456.50px"><span class="v">elementor-widget elementor-widget-text-editor&quot;</span><span class="a"> data-id=</span></div>
<div class="ln" style="left:170.8px;top:474.64px"><span class="v">&quot;a7fcfe6&quot;</span><span class="a"> data-element_type=</span><span class="v">&quot;widget&quot;</span><span class="a"> data-widget_type=</span><span class="v">&quot;text-</span></div>
<div class="ln" style="left:170.8px;top:492.78px"><span class="v">editor.default&quot;</span><span class="t">&gt;</span></div>
<div class="hl" style="top:510.72px"></div>
<div class="tr" style="left:193.9px;top:513.92px"></div>
<div class="ln" style="left:210.9px;top:510.92px"><span class="t">&lt;div</span><span class="a"> class=</span><span class="v">&quot;elementor-widget-container&quot;</span><span class="t">&gt;…&lt;/div&gt;</span><span class="g"> = $0</span></div>
<div class="ln" style="left:191.3px;top:529.06px"><span class="t">&lt;/div&gt;</span></div>
<div class="tr" style="left:174.3px;top:550.20px"></div>
<div class="ln" style="left:191.3px;top:547.20px"><span class="t">&lt;div</span><span class="a"> class=</span><span class="v">&quot;elementor-element elementor-element-4a07281</span></div>
<div class="ln" style="left:170.8px;top:565.34px"><span class="v">elementor-widget elementor-widget-text-editor&quot;</span><span class="a"> data-id=</span></div>
<div class="ln" style="left:170.8px;top:583.48px"><span class="v">&quot;4a07281&quot;</span><span class="a"> data-element_type=</span><span class="v">&quot;widget&quot;</span><span class="a"> data-widget_type=</span><span class="v">&quot;text-</span></div>
<div class="ln" style="left:170.8px;top:601.62px"><span class="v">editor.default&quot;</span><span class="t">&gt;…&lt;/div&gt;</span></div>
<div class="tr" style="left:174.3px;top:622.76px"></div>
<div class="ln" style="left:191.3px;top:619.76px"><span class="t">&lt;div</span><span class="a"> class=</span><span class="v">&quot;elementor-element elementor-element-d1826af</span></div>
<div class="ln" style="left:170.8px;top:637.90px"><span class="v">elementor-widget elementor-widget-button&quot;</span><span class="a"> data-id=</span><span class="v">&quot;d1826af&quot;</span></div>
<div class="ln" style="left:170.8px;top:656.04px"><span class="a">data-element_type=</span><span class="v">&quot;widget&quot;</span><span class="a"> data-widget_type=</span><span class="v">&quot;button.default&quot;</span><span class="t">&gt;</span></div>
<div class="ln" style="left:170.8px;top:674.18px"><span class="t">…&lt;/div&gt;</span></div>
<div class="ln" style="left:171.7px;top:692.32px"><span class="t">&lt;/div&gt;</span></div>
<div class="tr" style="left:154.7px;top:713.46px"></div>
<div class="ln" style="left:171.7px;top:710.46px"><span class="t">&lt;div</span><span class="a"> class=</span><span class="v">&quot;elementor-element elementor-element-83b7b75 e-</span></div>
<div class="ln" style="left:151.2px;top:728.60px"><span class="v">con-full e-flex e-con e-child&quot;</span><span class="a"> data-id=</span><span class="v">&quot;83b7b75&quot;</span><span class="a"> data-</span></div>
<div class="ln" style="left:151.2px;top:746.74px"><span class="a">element_type=</span><span class="v">&quot;container&quot;</span><span class="t">&gt;…&lt;/div&gt;</span><span class="bd">flex</span></div>
<div class="ln" style="left:152.1px;top:764.88px"><span class="t">&lt;/div&gt;</span></div>
<div class="ln" style="left:132.5px;top:783.02px"><span class="t">&lt;/div&gt;</span></div>
<div class="tr" style="left:115.5px;top:804.16px"></div>
<div class="ln" style="left:132.5px;top:801.16px"><span class="t">&lt;div</span><span class="a"> class=</span><span class="v">&quot;elementor-element elementor-element-dde522e e-flex e-</span></div>
  </div>
  <div id="tabs"></div>
  <div class="abs pill"></div>
  <div class="abs st" style="left:130px;top:901px;color:#fff">Styles</div>
  <div class="abs st" style="left:197.5px;top:901px">Computed</div>
  <div class="abs st" style="left:295.5px;top:901px">Layout</div>
  <div class="abs st" style="left:367px;top:901px">Font</div>
  <div class="abs st" style="left:422.5px;top:901px">Changes</div>
  <div class="abs st" style="left:508.5px;top:901px">Node</div>
  <div class="abs st" style="left:570.5px;top:901px">Layers</div>
  <div id="sty"></div>
  <div class="eic" style="left:8px;top:936.5px">E</div>
  <div class="abs sa" style="left:32px;top:937px">Style Attribute <span style="color:#8a8a8a">{</span></div>
  <div class="abs sa" style="left:9px;top:958px;color:#8a8a8a">}</div>
  <div class="abs hr2" style="top:984px"></div>
  <div class="bic" style="left:8px;top:990.5px">{}</div>
  <div class="abs ln2" style="left:32px;top:992px">.elementor-13 .elementor-element.elementor-element-a7fcfe6 &gt;</div>
  <div class="abs ln2" style="left:9px;top:1011px">.elementor-widget-container {</div>
  <div class="abs link">post-13.css:1:610</div>
  <div class="help">?</div>
</div>

<div id="dtb"></div><div id="dtb2"></div><div id="dtb3"></div>
</body></html>
